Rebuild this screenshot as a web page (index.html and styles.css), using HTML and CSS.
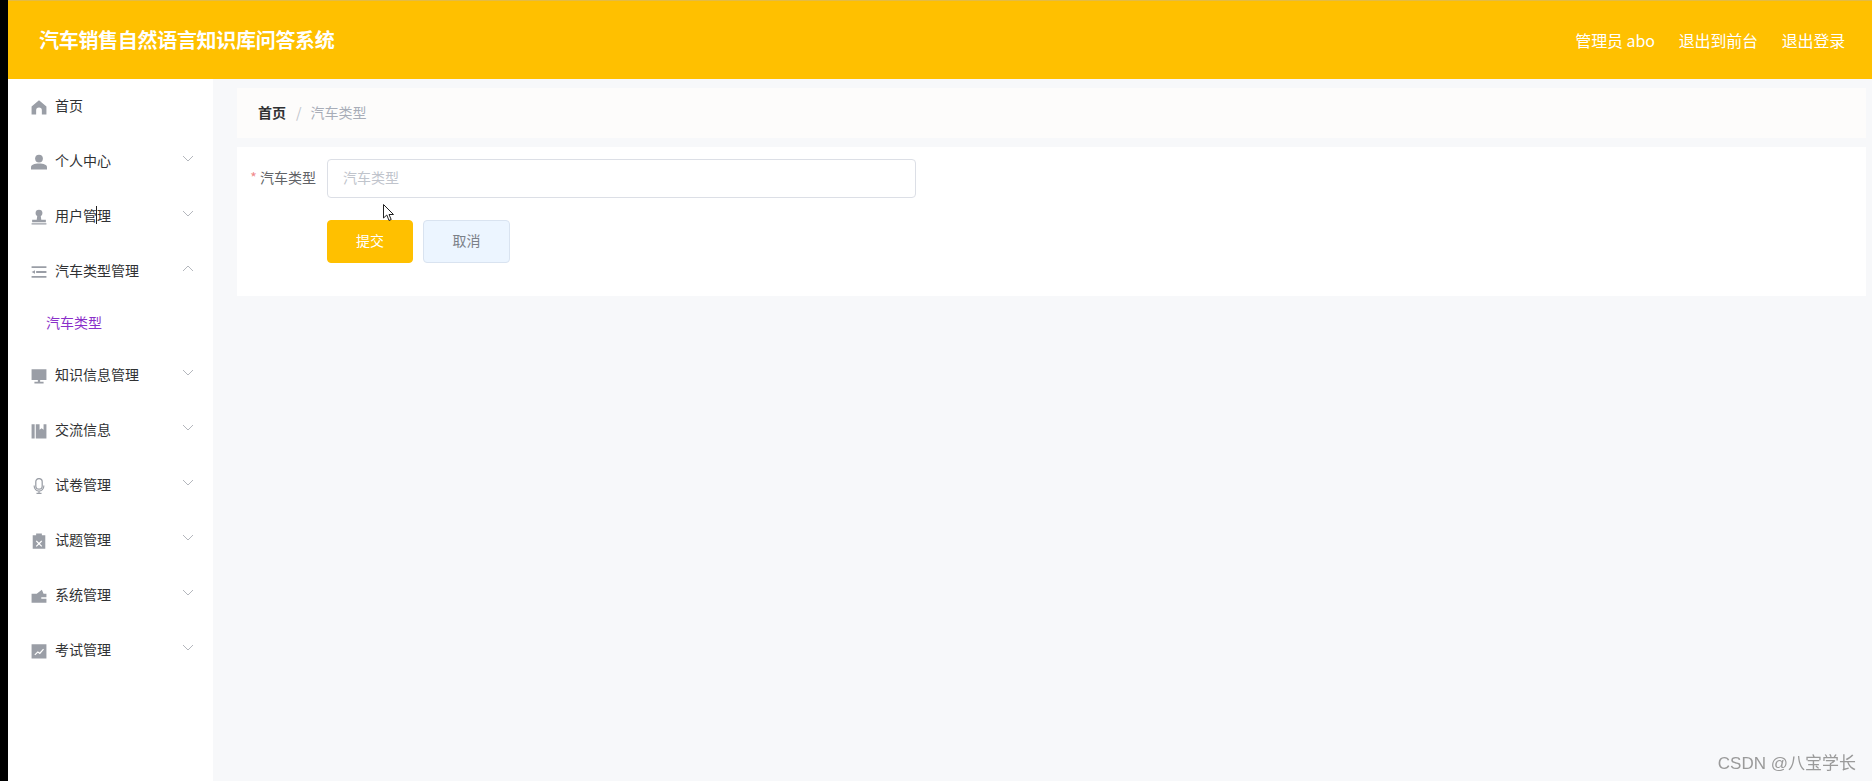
FILE: index.html
```html
<!DOCTYPE html>
<html lang="en">

<head>
    <meta charset="UTF-8">
    <title>汽车类型</title>
    <link rel="stylesheet" href="styles.css">
</head>

<body>
    <div class="app">
        <header class="topbar">
            <div class="site-title">汽车销售自然语言知识库问答系统</div>
            <nav class="top-links">
                <span class="admin-name">管理员 abo</span>
                <a>退出到前台</a>
                <a>退出登录</a>
            </nav>
        </header>

        <div class="main">
            <!-- Sidebar -->
            <aside class="sidebar">
                <div class="menu-row">
                    <svg class="menu-icon" viewBox="0 0 14 14"><path d="M7 1 0.500 6.500V13.500H4.500V10A2.500 2.500 0 0 1 9.500 10V13.500H13.500V6.500Z"/></svg>
                    <span>首页</span>
                </div>
                <div class="menu-row">
                    <svg class="menu-icon" viewBox="0 0 14 14"><circle cx="7" cy="4" r="3.400"/><path d="M0 13.500V11.500C0 9.300 3 8.300 7 8.300S14 9.300 14 11.500V13.500Z"/></svg>
                    <span>个人中心</span>
                    <svg class="chevron" viewBox="0 0 12 7"><path d="M1 1 6 6 11 1"/></svg>
                </div>
                <div class="menu-row">
                    <svg class="menu-icon" viewBox="0 0 14 14"><circle cx="7" cy="3.600" r="3"/><path d="M5.500 6H8.500L9 9.500H13V11.500H1V9.500H5ZM0.500 12.500H13.500V13.500H0.500Z"/></svg>
                    <span>用户管理</span>
                    <svg class="chevron" viewBox="0 0 12 7"><path d="M1 1 6 6 11 1"/></svg>
                    <i class="text-caret"></i>
                </div>
                <div class="menu-row">
                    <svg class="menu-icon" viewBox="0 0 14 14"><path d="M0.500 2H13.500V3.500H0.500ZM4.500 6.200H13.500V7.800H4.500ZM0.500 10.500H13.500V12H0.500ZM0.500 7 3.500 5.500V8.500Z"/></svg>
                    <span>汽车类型管理</span>
                    <svg class="chevron" viewBox="0 0 12 7"><path d="M1 6 6 1 11 6"/></svg>
                </div>
                <div class="submenu-row">汽车类型</div>
                <div class="menu-row">
                    <svg class="menu-icon" viewBox="0 0 14 14"><path d="M0.500 1H13.500V10.500H0.500ZM6 10.500H8V12H11V13.500H3V12H6Z"/></svg>
                    <span>知识信息管理</span>
                    <svg class="chevron" viewBox="0 0 12 7"><path d="M1 1 6 6 11 1"/></svg>
                </div>
                <div class="menu-row">
                    <svg class="menu-icon" viewBox="0 0 14 14"><path d="M0.500 1H3.200V13.500H0.500ZM4.200 1H7.500V6L9.300 4.500 11 6V1H13.500V13.500H4.200Z"/></svg>
                    <span>交流信息</span>
                    <svg class="chevron" viewBox="0 0 12 7"><path d="M1 1 6 6 11 1"/></svg>
                </div>
                <div class="menu-row">
                    <svg class="menu-icon" viewBox="0 0 14 14"><path d="M7 0.500A2.800 2.800 0 0 0 4.200 3.300V7A2.800 2.800 0 0 0 9.800 7V3.300A2.800 2.800 0 0 0 7 0.500Z" fill="none" stroke="#9a9ea6" stroke-width="1.100"/><path d="M2.800 6.500V7.200A4.200 4.200 0 0 0 11.200 7.200V6.500M7 11.400V13.500M4.800 13.500H9.200" fill="none" stroke="#9a9ea6" stroke-width="1"/></svg>
                    <span>试卷管理</span>
                    <svg class="chevron" viewBox="0 0 12 7"><path d="M1 1 6 6 11 1"/></svg>
                </div>
                <div class="menu-row">
                    <svg class="menu-icon" viewBox="0 0 14 14"><path fill-rule="evenodd" d="M4.500 0.500H9.500V2H12.500V13.800H1.500V2H4.500ZM5 6.500 4.200 7.300 6.200 9.300 4.200 11.300 5 12.100 7 10.100 9 12.100 9.800 11.300 7.800 9.300 9.800 7.300 9 6.500 7 8.500Z"/></svg>
                    <span>试题管理</span>
                    <svg class="chevron" viewBox="0 0 12 7"><path d="M1 1 6 6 11 1"/></svg>
                </div>
                <div class="menu-row">
                    <svg class="menu-icon" viewBox="0 0 14 14"><path fill-rule="evenodd" d="M0.500 5H5L9.500 1.500 11 5H13.500V13H0.500ZM9 8V9.500H13.500V8Z"/></svg>
                    <span>系统管理</span>
                    <svg class="chevron" viewBox="0 0 12 7"><path d="M1 1 6 6 11 1"/></svg>
                </div>
                <div class="menu-row">
                    <svg class="menu-icon" viewBox="0 0 14 14"><path fill-rule="evenodd" d="M0.500 1H13.500V13.500H0.500ZM3 10 3.700 10.700 6 8.500 7.800 9.800 11.300 5.700 10.600 5 7.600 8.400 5.900 7.200Z"/></svg>
                    <span>考试管理</span>
                    <svg class="chevron" viewBox="0 0 12 7"><path d="M1 1 6 6 11 1"/></svg>
                </div>
            </aside>

            <!-- Content -->
            <main class="content">
                <div class="breadcrumb">
                    <b>首页</b>
                    <span class="crumb-sep">/</span>
                    <span class="crumb-now">汽车类型</span>
                </div>
                <form class="form-card">
                    <div class="form-group">
                        <label class="form-label" for="car-type"><em>*</em> 汽车类型</label>
                        <input type="text" id="car-type" placeholder="汽车类型">
                    </div>
                    <div class="form-actions">
                        <button type="button" class="btn btn-primary">提交</button>
                        <button type="button" class="btn btn-cancel">取消</button>
                    </div>
                </form>
            </main>
        </div>
    </div>

    <!-- mouse pointer caught in the capture -->
    <svg class="cursor" viewBox="0 0 12 18"><path d="M0.500 0.500V14L3.800 11 6 16.500 8.200 15.500 6 10.500H10.500Z"/></svg>
    <div class="watermark">CSDN @八宝学长</div>
</body>

</html>
```
FILE: styles.css
```css
* {
    box-sizing: border-box;
}

html,
body {
    height: 100%;
}

body {
    margin: 0;
    background: #000;
    overflow: hidden;
    font-family: "Noto Sans CJK SC", "Liberation Sans", sans-serif;
    font-size: 14px;
    color: #303133;
}

.app {
    display: flex;
    flex-direction: column;
    height: 100%;
    margin-left: 8px;
    background: #f7f8fa;
}

.topbar {
    display: flex;
    align-items: center;
    justify-content: space-between;
    height: 79px;
    padding: 0 27px 0 31px;
    background: #ffc000;
    border-top: 1px solid #e3bb45;
    color: #fff;
}

.site-title {
    font-size: 20px;
    font-weight: 700;
    line-height: 1;
    letter-spacing: -0.3px;
}

.top-links {
    display: flex;
    gap: 24px;
    font-size: 16px;
    line-height: 1;
}

.top-links a {
    letter-spacing: -0.2px;
}

.admin-name {
    letter-spacing: -0.1px;
}

.main {
    display: flex;
    flex: 1;
    min-height: 0;
}

.sidebar {
    width: 205px;
    flex-shrink: 0;
    background: #fff;
}

.menu-row {
    position: relative;
    display: flex;
    align-items: center;
    height: 55px;
    padding: 0 19px 0 23px;
    color: #303133;
}

.menu-row span {
    flex: 1;
    margin-left: 8px;
    padding-bottom: 3px;
}

.menu-icon {
    width: 16px;
    height: 16px;
    fill: #9a9ea6;
}

.chevron {
    width: 12px;
    height: 7px;
    margin-top: -7px;
    fill: none;
    stroke: #b4b7bd;
    stroke-width: 1;
}

.text-caret {
    position: absolute;
    left: 88px;
    top: 17px;
    width: 1px;
    height: 18px;
    background: #222;
}

.submenu-row {
    height: 49px;
    padding-left: 38px;
    line-height: 46px;
    color: #8a2fc9;
}

.content {
    flex: 1;
    padding: 9px 6px 0 24px;
}

.breadcrumb {
    display: flex;
    align-items: center;
    height: 50px;
    padding: 0 0 2px 21px;
    background: #fdfcfb;
}

.breadcrumb b {
    color: #303133;
}

.crumb-sep {
    margin: 0 9px 0 10px;
    color: #c0c4cc;
}

.crumb-now {
    color: #a8adb8;
}

.form-card {
    height: 149px;
    margin-top: 9px;
    padding-top: 12px;
    background: #fff;
}

.form-group {
    display: flex;
    align-items: center;
}

.form-label {
    width: 90px;
    padding: 0 11px 4px 0;
    text-align: right;
    color: #606266;
}

.form-label em {
    font-style: normal;
    color: #f08a8a;
}

.form-group input {
    width: 589px;
    height: 39px;
    padding: 0 15px 3px;
    border: 1px solid #dcdfe6;
    border-radius: 4px;
    outline: none;
    font: inherit;
}

.form-group input::placeholder {
    color: #c0c4cc;
}

.form-actions {
    display: flex;
    gap: 10px;
    margin-top: 22px;
    padding-left: 90px;
}

.btn {
    width: 87px;
    height: 43px;
    padding: 0 0 4px;
    border-radius: 4px;
    font: inherit;
}

.btn-primary {
    width: 86px;
    background: #ffc000;
    border: 1px solid #ffc000;
    color: #fff;
}

.btn-cancel {
    background: #ecf5ff;
    border: 1px solid #d9e3f0;
    color: #7b8088;
}

.cursor {
    position: fixed;
    left: 383px;
    top: 204px;
    width: 12px;
    height: 18px;
    fill: #fff;
    stroke: #222;
    stroke-width: 1;
}

.watermark {
    position: fixed;
    right: 16px;
    bottom: 7px;
    font-family: "Liberation Sans", "Noto Sans CJK SC", sans-serif;
    font-size: 17px;
    color: #9a9a9a;
}
```
